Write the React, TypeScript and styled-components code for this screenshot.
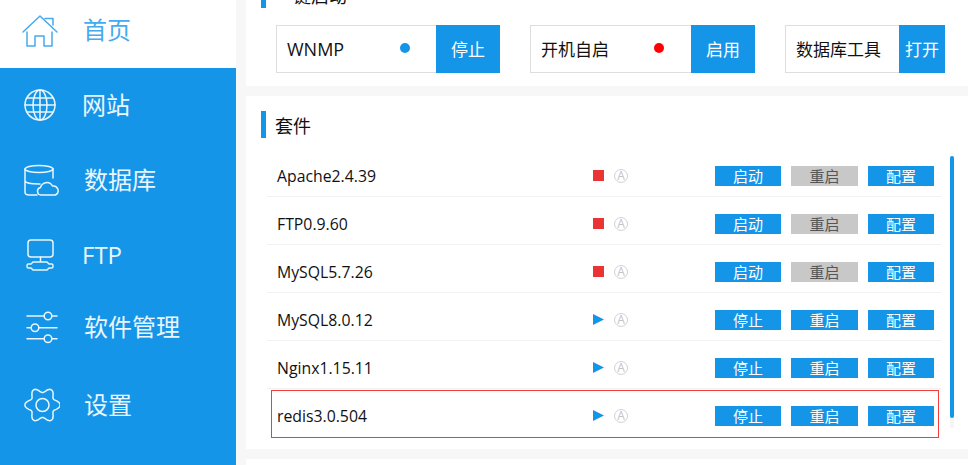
import React from "react";
import styled, { createGlobalStyle } from "styled-components";

const BLUE = "#1595e8";
const CJK = `"Open Sans", "Noto Sans CJK SC", sans-serif`;

const Global = createGlobalStyle`
  html, body { margin: 0; padding: 0; background: #f7f7f7; }
  body { font-family: ${CJK}; overflow: hidden; }
`;

const Page = styled.div`
  display: flex;
  width: 968px;
  height: 465px;
  overflow: hidden;
  background: #f7f7f7;
`;

const Sidebar = styled.nav`
  flex: 0 0 236px;
  background: ${BLUE};
  display: flex;
  flex-direction: column;
`;

const NavItem = styled.div<{ $h: number; $active?: boolean }>`
  display: flex;
  align-items: center;
  height: ${(p) => p.$h}px;
  padding-left: 20px;
  box-sizing: border-box;
  background: ${(p) => (p.$active ? "#fff" : "transparent")};
  color: ${(p) => (p.$active ? "#45aaee" : "#eaf5fd")};
  padding-bottom: ${(p) => (p.$active ? 8 : 0)}px;
`;

const NavIcon = styled.svg`
  width: 40px;
  height: 40px;
  flex: none;
  fill: none;
  stroke: currentColor;
  stroke-width: 1.5;
  stroke-linecap: round;
  stroke-linejoin: round;
`;

const NavLabel = styled.span<{ $x?: number }>`
  margin-left: ${(p) => p.$x ?? 24}px;
  font-size: 24px;
  line-height: 32px;
  white-space: nowrap;
`;

const Main = styled.main`
  flex: 1;
  margin-left: 10px;
  margin-top: -34px;
  display: flex;
  flex-direction: column;
  gap: 10px;
  min-width: 0;
`;

const Card = styled.section`
  background: #fff;
  padding: 15px 0 12px 15px;
  box-sizing: border-box;
`;

const SectionTitle = styled.h2`
  margin: 0;
  height: 27px;
  border-left: 5px solid ${BLUE};
  padding-left: 9px;
  font-size: 18px;
  font-weight: 400;
  line-height: 30px;
  color: #111;
`;

const QuickRow = styled.div`
  display: flex;
  gap: 30px;
  margin: 17px 0 1px 15px;
`;

const Quick = styled.div`
  display: flex;
  height: 48px;
`;

const QuickField = styled.div<{ $w: number }>`
  width: ${(p) => p.$w}px;
  box-sizing: border-box;
  border: 1px solid #dedede;
  border-right: 0;
  padding: 0 0 1px 10px;
  display: flex;
  align-items: center;
  justify-content: space-between;
  font-size: 17px;
  color: #111;
`;

const LatinName = styled.span`
  font-size: 18px;
`;

const Dot = styled.i<{ $color: string; $right: number }>`
  width: 10px;
  height: 10px;
  margin: -1px ${(p) => p.$right}px 0 0;
  border-radius: 50%;
  background: ${(p) => p.$color};
`;

const QuickButton = styled.button<{ $w: number }>`
  width: ${(p) => p.$w}px;
  border: 0;
  padding: 0 0 1px;
  background: ${BLUE};
  color: #fff;
  font: inherit;
  font-size: 17px;
`;

const ListWrap = styled.div`
  display: flex;
  gap: 7px;
  margin: 11px 0 0 6px;
`;

const List = styled.div`
  width: 676px;
`;

const Row = styled.div<{ $marked?: boolean }>`
  position: relative;
  display: flex;
  align-items: center;
  height: 48px;
  box-sizing: border-box;
  padding: 6px 0 0 10px;
  border-bottom: 1px solid ${(p) => (p.$marked ? "transparent" : "#f2f2f2")};
  border-bottom-right-radius: 3px;
  ${(p) =>
    p.$marked
      ? `&::after {
          content: "";
          position: absolute;
          left: 4px;
          top: 1px;
          width: 668px;
          height: 48px;
          box-sizing: border-box;
          border: 1px solid #f33d3d;
        }`
      : ""}
`;

const Name = styled.span`
  width: 316px;
  font-size: 15.8px;
  color: #111;
  white-space: nowrap;
`;

const StatusSlot = styled.span`
  width: 21px;
  display: flex;
`;

const StopMark = styled.i`
  width: 11px;
  height: 11px;
  margin-top: -1px;
  background: #e83434;
`;

const PlayMark = styled.svg`
  width: 11px;
  height: 11px;
  margin-top: -1px;
  fill: ${BLUE};
`;

const AutoMark = styled.span`
  width: 14px;
  height: 14px;
  box-sizing: border-box;
  border: 1px solid #d2d2d2;
  border-radius: 50%;
  color: #c4c4c4;
  font-size: 12px;
  line-height: 12px;
  text-align: center;
`;

const Actions = styled.div`
  display: flex;
  gap: 10px;
  margin-left: 87px;
`;

const RowButton = styled.button<{ $w: number; $off?: boolean }>`
  width: ${(p) => p.$w}px;
  height: 20px;
  border: 0;
  padding: 0;
  background: ${(p) => (p.$off ? "#c8c8c8" : BLUE)};
  color: ${(p) => (p.$off ? "#555" : "#fff")};
  font: inherit;
  font-size: 15px;
  line-height: 20px;
`;

const ScrollTrack = styled.div`
  width: 4px;
  height: 272px;
  margin-top: 7px;
  background: #f5f5f5;
`;

const ScrollThumb = styled.div`
  height: 262px;
  border-radius: 2px;
  background: ${BLUE};
`;

const gearPath = (() => {
  const pts: string[] = [];
  for (let i = 0; i < 144; i++) {
    const a = (i / 144) * Math.PI * 2;
    const r = 15 + 2.6 * Math.cos(6 * a);
    pts.push(`${(22.5 + r * Math.cos(a)).toFixed(2)},${(20 + r * Math.sin(a)).toFixed(2)}`);
  }
  return `M${pts.join("L")}Z`;
})();

const rows = [
  { name: "Apache2.4.39", on: false },
  { name: "FTP0.9.60", on: false },
  { name: "MySQL5.7.26", on: false },
  { name: "MySQL8.0.12", on: true },
  { name: "Nginx1.15.11", on: true },
  { name: "redis3.0.504", on: true, marked: true },
];

export default function App() {
  return (
    <Page>
      <Global />
      <Sidebar>
        <NavItem $h={68} $active>
          <NavIcon viewBox="0 0 40 40">
            <path d="M3 22 20 6l17 16M7 22v14h8V26h9v10h8V22M25 8.500h8V15" />
          </NavIcon>
          <NavLabel $x={23}>首页</NavLabel>
        </NavItem>
        <NavItem $h={74}>
          <NavIcon viewBox="0 0 40 40">
            <circle cx="20" cy="20" r="15" />
            <ellipse cx="20" cy="20" rx="7" ry="15" />
            <path d="M20 5v30M5 20h30M7 13h26M7 27h26" />
          </NavIcon>
          <NavLabel $x={22}>网站</NavLabel>
        </NavItem>
        <NavItem $h={76}>
          <NavIcon viewBox="0 0 40 40">
            <ellipse cx="19" cy="9" rx="14" ry="3.500" />
            <path d="M5 9v23q0 3 4 3h8M5 21q1 3 14 3h1M33 9v9" />
            <path d="M21 35a3.800 3.800 0 0 1-.5-7.500 6.500 6.500 0 0 1 12-1.500 4.800 4.800 0 0 1 3 9z" />
          </NavIcon>
          <NavLabel>数据库</NavLabel>
        </NavItem>
        <NavItem $h={74}>
          <NavIcon viewBox="0 0 40 40">
            <rect x="8" y="5" width="25" height="17" rx="3" />
            <path d="M20.500 22v5M13 27h14l2 2h3q1 0 1 2t-1 2h-3l-2 2H13l-2-2H8q-1 0-1-2t1-2h3z" />
          </NavIcon>
          <NavLabel $x={22}>FTP</NavLabel>
        </NavItem>
        <NavItem $h={70}>
          <NavIcon viewBox="0 0 40 40">
            <path d="M7 9h17M32 9h5M7 20.700h4M19 20.700h18M7 31.700h17M32 31.700h5" />
            <circle cx="28" cy="9" r="3.800" />
            <circle cx="15" cy="20.700" r="3.800" />
            <circle cx="28" cy="31.700" r="3.800" />
          </NavIcon>
          <NavLabel>软件管理</NavLabel>
        </NavItem>
        <NavItem $h={86}>
          <NavIcon viewBox="0 0 40 40">
            <path d={gearPath} />
            <circle cx="22.500" cy="20" r="6.500" />
          </NavIcon>
          <NavLabel>设置</NavLabel>
        </NavItem>
      </Sidebar>
      <Main>
        <Card>
          <SectionTitle>一键启动</SectionTitle>
          <QuickRow>
            <Quick>
              <QuickField $w={160}>
                <LatinName>WNMP</LatinName>
                <Dot $color={BLUE} $right={26} />
              </QuickField>
              <QuickButton $w={64}>停止</QuickButton>
            </Quick>
            <Quick>
              <QuickField $w={161}>
                开机自启
                <Dot $color="#ff0000" $right={27} />
              </QuickField>
              <QuickButton $w={64}>启用</QuickButton>
            </Quick>
            <Quick>
              <QuickField $w={114}>数据库工具</QuickField>
              <QuickButton $w={46}>打开</QuickButton>
            </Quick>
          </QuickRow>
        </Card>
        <Card>
          <SectionTitle>套件</SectionTitle>
          <ListWrap>
            <List>
              {rows.map((r) => (
                <Row key={r.name} $marked={r.marked}>
                  <Name>{r.name}</Name>
                  <StatusSlot>
                    {r.on ? (
                      <PlayMark viewBox="0 0 11 11">
                        <path d="M0 0l11 5.500L0 11z" />
                      </PlayMark>
                    ) : (
                      <StopMark />
                    )}
                  </StatusSlot>
                  <AutoMark>A</AutoMark>
                  <Actions>
                    <RowButton $w={66}>{r.on ? "停止" : "启动"}</RowButton>
                    <RowButton $w={67} $off={!r.on}>
                      重启
                    </RowButton>
                    <RowButton $w={66}>配置</RowButton>
                  </Actions>
                </Row>
              ))}
            </List>
            <ScrollTrack>
              <ScrollThumb />
            </ScrollTrack>
          </ListWrap>
        </Card>
        <Card />
      </Main>
    </Page>
  );
}
